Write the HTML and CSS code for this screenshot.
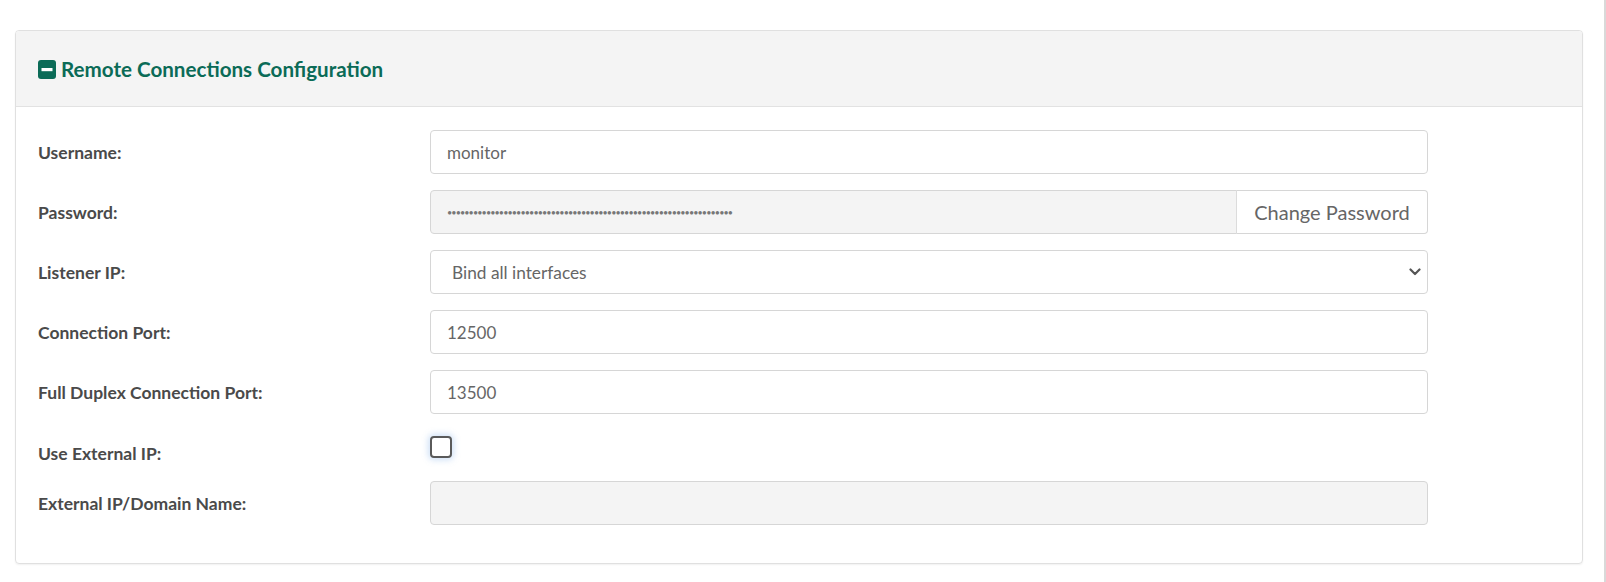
FILE: index.html
```html
<!DOCTYPE html>
<html>
<head>
<meta charset="utf-8">
<link rel="stylesheet" href="styles.css">
</head>
<body>
<div class="page">
  <div class="panel">
    <div class="panel-head">
      <svg class="toggle" width="18" height="19" viewBox="0 0 18 19"><rect x="0" y="0" width="18" height="19" rx="3" fill="#0b6b57"/><rect x="3.5" y="8" width="11" height="3.2" fill="#fff"/></svg>
      <span class="title">Remote Connections Configuration</span>
    </div>
    <div class="panel-body">
      <div class="row">
        <label class="lbl">Username:</label>
        <div class="field"><input class="ctl" type="text" value="monitor"></div>
      </div>
      <div class="row">
        <label class="lbl">Password:</label>
        <div class="field group">
          <input class="ctl pw" type="text" readonly value="••••••••••••••••••••••••••••••••••••••••••••••••••••••••••••••••••">
          <button class="btn">Change Password</button>
        </div>
      </div>
      <div class="row">
        <label class="lbl">Listener IP:</label>
        <div class="field sel-wrap">
          <select class="ctl sel"><option>Bind all interfaces</option></select>
          <svg class="chev" width="12" height="8" viewBox="0 0 12 8"><path d="M1.5 1.5 L6 6 L10.5 1.5" fill="none" stroke="#555" stroke-width="2.2" stroke-linecap="round" stroke-linejoin="round"/></svg>
        </div>
      </div>
      <div class="row">
        <label class="lbl">Connection Port:</label>
        <div class="field"><input class="ctl" type="text" value="12500"></div>
      </div>
      <div class="row">
        <label class="lbl">Full Duplex Connection Port:</label>
        <div class="field"><input class="ctl" type="text" value="13500"></div>
      </div>
      <div class="row row-check">
        <label class="lbl">Use External IP:</label>
        <div class="field"><span class="check"></span></div>
      </div>
      <div class="row">
        <label class="lbl">External IP/Domain Name:</label>
        <div class="field"><input class="ctl dis" type="text" disabled value=""></div>
      </div>
    </div>
  </div>
</div>
</body>
</html>
```
FILE: styles.css
```css
html, body {
  margin: 0;
  padding: 0;
  background: #fff;
}
.page {
  box-sizing: border-box;
  width: 1606px;
  height: 582px;
  padding: 30px 22px 0 15px;
  border-right: 2px solid #d9d9d9;
  font-family: "Lato", "Liberation Sans", sans-serif;
}
.panel {
  width: 1568px;
  box-sizing: border-box;
  border: 1px solid #e0e0e0;
  border-radius: 4px;
  box-shadow: 0 1px 2px rgba(0,0,0,0.06);
  overflow: hidden;
}
.panel-head {
  height: 75px;
  background: #f4f4f4;
  border-bottom: 1px solid #e2e2e2;
  display: flex;
  align-items: center;
  padding-left: 22px;
  gap: 5px;
}
.toggle {
  display: block;
  margin-top: 1px;
}
.title {
  color: #0b6b57;
  font-weight: 700;
  font-size: 20.6px;
  letter-spacing: 0;
}
.panel-body {
  padding: 23px 0 38px 22px;
}
.row {
  display: flex;
  align-items: center;
  height: 44px;
  margin-bottom: 16px;
}
.row:last-child {
  margin-bottom: 0;
}
.lbl {
  width: 392px;
  flex: none;
  font-size: 17.5px;
  font-weight: 700;
  color: #4a4a4a;
}
.field {
  width: 998px;
  height: 44px;
  display: flex;
}
.ctl {
  box-sizing: border-box;
  width: 100%;
  height: 44px;
  border: 1px solid #d6d6d6;
  border-radius: 4px;
  padding: 0 16px;
  font-family: "Lato", "Liberation Sans", sans-serif;
  font-size: 17px;
  color: #666;
  background: #fff;
  outline: none;
}
.group .pw {
  flex: 1;
  width: auto;
  background: #f4f4f4;
  border-radius: 4px 0 0 4px;
  font-size: 9px;
  letter-spacing: -0.9px;
  color: #777;
}
.btn {
  flex: none;
  width: 192px;
  height: 44px;
  box-sizing: border-box;
  border: 1px solid #d6d6d6;
  border-left: 1px solid #dcdcdc;
  margin-left: -1px;
  border-radius: 0 4px 4px 0;
  background: #fff;
  font-family: "Lato", "Liberation Sans", sans-serif;
  font-size: 20px;
  color: #666;
  padding: 0;
}
.sel-wrap {
  position: relative;
}
.sel {
  -webkit-appearance: none;
  appearance: none;
  padding-left: 21px;
  font-size: 17.3px;
}
.chev {
  position: absolute;
  right: 7px;
  top: 18px;
}
.row-check {
  height: 35px;
  align-items: flex-start;
}
.row-check .lbl {
  margin-top: 13px;
}
.row-check .field {
  height: 35px;
}
.check {
  display: block;
  box-sizing: border-box;
  width: 22px;
  height: 22px;
  margin-top: 6px;
  border: 2px solid #5a5a5a;
  border-radius: 4px;
  background: #fff;
  box-shadow: 0 0 6px 2px rgba(120, 170, 230, 0.35);
}
.dis {
  background: #f4f4f4;
}
```
